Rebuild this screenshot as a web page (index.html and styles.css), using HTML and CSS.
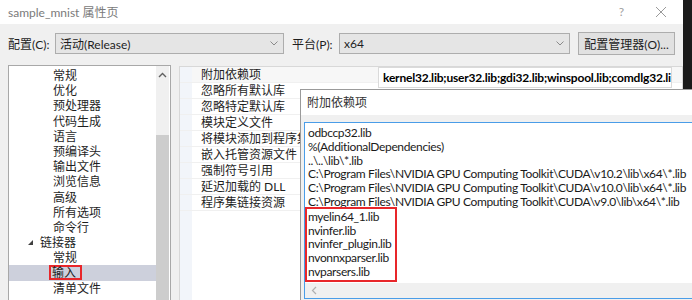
FILE: index.html
```html
<!DOCTYPE html>
<html lang="zh-CN">
<head>
  <meta charset="UTF-8">
  <title>sample_mnist 属性页</title>
  <link rel="stylesheet" href="styles.css">
</head>
<body>
  <div class="window">
    <div class="titlebar">
      <span class="title">sample_mnist 属性页</span>
      <span class="help">?</span>
      <span class="close">
        <svg width="12" height="12" viewBox="0 0 12 12"><path d="M1 1L11 11M11 1L1 11" stroke="#9a9a9a" stroke-width="1" fill="none"/></svg>
      </span>
    </div>

    <div class="toolbar">
      <span class="label">配置(C):</span>
      <div class="combo combo-config">
        <span>活动(Release)</span>
        <svg class="caret" width="8" height="5" viewBox="0 0 8 5"><path d="M0.5 0.5L4 4L7.5 0.5" stroke="#8a8a8a" fill="none"/></svg>
      </div>
      <span class="label label-platform">平台(P):</span>
      <div class="combo combo-platform">
        <span>x64</span>
        <svg class="caret" width="8" height="5" viewBox="0 0 8 5"><path d="M0.5 0.5L4 4L7.5 0.5" stroke="#8a8a8a" fill="none"/></svg>
      </div>
      <div class="button">配置管理器(O)...</div>
    </div>

    <div class="main">
      <div class="tree">
        <div class="tree-items">
          <div class="item child">常规</div>
          <div class="item child">优化</div>
          <div class="item child">预处理器</div>
          <div class="item child">代码生成</div>
          <div class="item child">语言</div>
          <div class="item child">预编译头</div>
          <div class="item child">输出文件</div>
          <div class="item child">浏览信息</div>
          <div class="item child">高级</div>
          <div class="item child">所有选项</div>
          <div class="item child">命令行</div>
          <div class="item group"><span class="arrow"></span>链接器</div>
          <div class="item child">常规</div>
          <div class="item child selected"><span class="marked">输入</span></div>
          <div class="item child">清单文件</div>
        </div>
        <div class="vscroll">
          <svg class="up" width="9" height="6" viewBox="0 0 9 6"><path d="M1 5L4.5 1.5L8 5" stroke="#606060" stroke-width="1.4" fill="none"/></svg>
          <div class="thumb"></div>
        </div>
      </div>

      <div class="grid">
        <div class="row active">
          <span class="name">附加依赖项</span>
          <div class="editor">kernel32.lib;user32.lib;gdi32.lib;winspool.lib;comdlg32.lib;advapi32.lib</div>
        </div>
        <div class="row"><span class="name">忽略所有默认库</span></div>
        <div class="row"><span class="name">忽略特定默认库</span></div>
        <div class="row"><span class="name">模块定义文件</span></div>
        <div class="row"><span class="name">将模块添加到程序集</span></div>
        <div class="row"><span class="name">嵌入托管资源文件</span></div>
        <div class="row"><span class="name">强制符号引用</span></div>
        <div class="row"><span class="name">延迟加载的 DLL</span></div>
        <div class="row"><span class="name">程序集链接资源</span></div>
      </div>
    </div>
  </div>

  <div class="dialog">
    <div class="dialog-title">附加依赖项</div>
    <div class="dialog-body">
      <div class="textbox">
        <div class="lines">
          <div>odbccp32.lib</div>
          <div>%(AdditionalDependencies)</div>
          <div>..\..\lib\*.lib</div>
          <div>C:\Program Files\NVIDIA GPU Computing Toolkit\CUDA\v10.2\lib\x64\*.lib</div>
          <div>C:\Program Files\NVIDIA GPU Computing Toolkit\CUDA\v10.0\lib\x64\*.lib</div>
          <div>C:\Program Files\NVIDIA GPU Computing Toolkit\CUDA\v9.0\lib\x64\*.lib</div>
          <div class="marked-group">
            <div>myelin64_1.lib</div>
            <div>nvinfer.lib</div>
            <div>nvinfer_plugin.lib</div>
            <div>nvonnxparser.lib</div>
            <div>nvparsers.lib</div>
          </div>
        </div>
        <div class="hscroll">
          <svg width="6" height="9" viewBox="0 0 6 9"><path d="M5 1L1.5 4.5L5 8" stroke="#b0b0b0" stroke-width="1.2" fill="none"/></svg>
        </div>
      </div>
    </div>
  </div>
</body>
</html>
```

FILE: styles.css
```css
body {
  margin: 0;
  background-color: #1b1b1b;
  font-family: "Lato", "Noto Sans CJK SC", sans-serif;
  font-size: 12px;
  color: #1e1e1e;
  width: 692px;
  height: 300px;
  overflow: hidden;
  position: relative;
}
.window {
  width: 683px;
  height: 300px;
  background-color: #f0f0f0;
}
.titlebar {
  height: 24px;
  background-color: #ffffff;
  display: flex;
  align-items: center;
  padding-left: 8px;
}
.title {
  color: #7a7a7a;
  flex: 1;
  margin-top: -2px;
}
.help {
  color: #a0a0a0;
  margin-right: 31px;
  margin-top: -2px;
}
.close {
  margin-right: 16px;
  display: flex;
}
.toolbar {
  display: flex;
  align-items: center;
  height: 41px;
  padding: 0 0 0 8px;
  white-space: nowrap;
}
.label {
  flex-shrink: 0;
  width: 47px;
  margin-top: -3px;
}
.label-platform {
  margin-left: 8px;
}
.combo {
  flex-shrink: 0;
  height: 19px;
  border: 1px solid #adadad;
  background-color: #e5e5e5;
  display: flex;
  align-items: center;
  justify-content: space-between;
  padding: 0 5px 0 4px;
  margin-top: -3px;
}
.combo-config {
  width: 218px;
}
.combo-platform {
  width: 220px;
}
.caret {
  margin-top: 1px;
}
.button {
  flex-shrink: 0;
  margin-left: 8px;
  width: 95px;
  height: 21px;
  border: 1px solid #adadad;
  background-color: #e1e1e1;
  display: flex;
  align-items: center;
  justify-content: center;
  margin-top: -3px;
}
.main {
  display: flex;
  padding-left: 8px;
  gap: 8px;
}
.tree {
  width: 161px;
  height: 240px;
  border: 1px solid #a8a8a8;
  background-color: #ffffff;
  display: flex;
}
.tree-items {
  flex: 1;
  padding-top: 2px;
}
.item {
  height: 15.2px;
  line-height: 15.2px;
  white-space: nowrap;
}
.child {
  padding-left: 44px;
}
.group {
  padding-left: 19px;
  display: flex;
  align-items: center;
}
.arrow {
  width: 0;
  height: 0;
  border-left: 5px solid transparent;
  border-bottom: 5px solid #404040;
  margin-right: 7px;
}
.selected {
  background-color: #cdd0dc;
}
.marked {
  display: inline-block;
  line-height: 11px;
  padding: 0 4px 0 1px;
  margin-left: -4px;
  border: 2px solid #e8262a;
}
.vscroll {
  width: 13px;
  margin-right: 1px;
  background-color: #f0f0f0;
  display: flex;
  flex-direction: column;
  align-items: center;
}
.up {
  margin-top: 6px;
}
.thumb {
  margin-top: 57px;
  width: 100%;
  flex: 1;
  background-color: #cdcdcd;
}
.grid {
  width: 502px;
  height: 240px;
  margin-top: 1px;
  border: 1px solid #d8d8d8;
  background-color: #ffffff;
  background-image: linear-gradient(to right, #f2f5fa 12px, transparent 12px);
}
.row {
  height: 15px;
  line-height: 15px;
  border-bottom: 1px solid #f0f0f0;
  padding-left: 21px;
  position: relative;
  white-space: nowrap;
}
.active {
  background-image: linear-gradient(to right, #f2f5fa 12px, #f7f7f7 12px);
}
.editor {
  position: absolute;
  left: 198px;
  top: 0;
  width: 288px;
  height: 19px;
  line-height: 19px;
  padding-left: 4px;
  border: 1px solid #dadada;
  background-color: #ffffff;
  font-weight: bold;
  letter-spacing: -0.2px;
  white-space: nowrap;
  overflow: hidden;
  color: #000000;
  z-index: 1;
}
.dialog {
  position: absolute;
  left: 300px;
  top: 89px;
  width: 400px;
  height: 220px;
  border: 1px solid #9a9a9a;
  background-color: #f0f0f0;
  z-index: 2;
}
.dialog-title {
  height: 25px;
  line-height: 25px;
  background-color: #ffffff;
  padding-left: 6px;
  color: #333333;
}
.dialog-body {
  padding: 7px 0 0 3px;
}
.textbox {
  height: 175px;
  border: 1px solid #4a9de8;
  background-color: #ffffff;
  display: flex;
  flex-direction: column;
}
.lines {
  flex: 1;
  padding: 3px 0 0 3px;
  line-height: 13.8px;
  letter-spacing: -0.35px;
  white-space: nowrap;
  color: #1a1a1a;
}
.marked-group {
  width: 86px;
  margin-top: 1px;
  outline: 2px solid #e8262a;
  outline-offset: 1px;
}
.hscroll {
  height: 15px;
  background-color: #f0f0f0;
  display: flex;
  align-items: center;
  padding-left: 6px;
}
```
